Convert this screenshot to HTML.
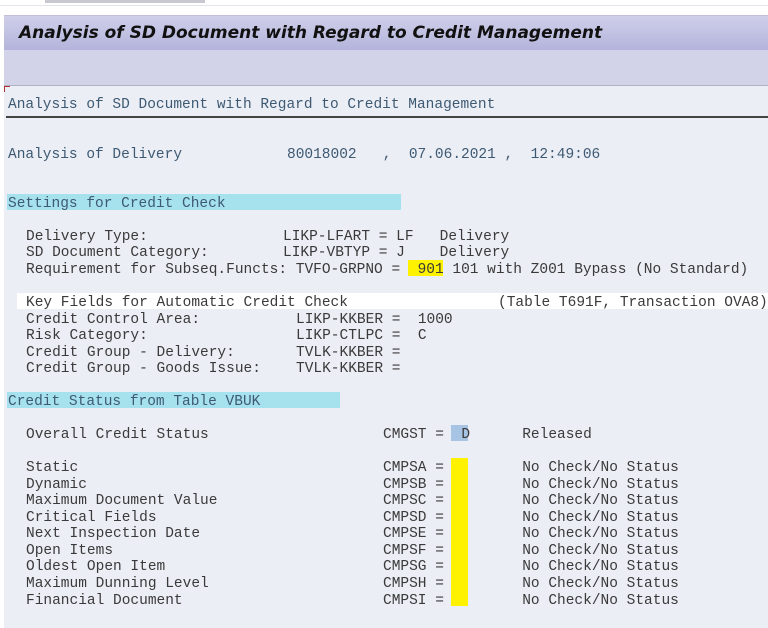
<!DOCTYPE html>
<html><head><meta charset="utf-8"><style>
*{margin:0;padding:0;box-sizing:border-box}
body{width:768px;height:628px;background:#fff;position:relative;overflow:hidden;font-family:"Liberation Mono",monospace;font-size:14.5px;color:#3a3a3a}
.a{position:absolute;white-space:pre;line-height:16px;margin-top:2px}
.h{color:#3e5a72}
.bar{position:absolute}
</style></head><body>
<div class="bar" style="left:45px;top:0;width:160px;height:3px;background:#c8c8d0"></div>
<div class="bar" style="left:0;top:5px;width:768px;height:1px;background:#e4e4ec"></div>
<div class="bar" style="left:4px;top:15px;width:764px;height:35px;background:linear-gradient(#cfcfea,#b4b4dc);border-top:1px solid #c0c0d8"></div>
<div class="a" style="left:19px;top:20px;font-family:'DejaVu Sans','Liberation Sans',sans-serif;font-weight:bold;font-style:italic;font-size:17px;line-height:22px;color:#111">Analysis of SD Document with Regard to Credit Management</div>
<div class="bar" style="left:4px;top:50px;width:764px;height:36px;background:#d2d3e8;border-bottom:1px solid #b0b2c8"></div>
<div class="bar" style="left:4px;top:86px;width:764px;height:542px;background:#eceef6"></div>
<div class="bar" style="left:4px;top:86px;width:6px;height:1px;background:#b03030"></div>
<div class="bar" style="left:4px;top:86px;width:1px;height:6px;background:#b03030"></div>
<div class="bar" style="left:6px;top:116px;width:762px;height:2px;background:#444"></div>
<div class="bar" style="left:7px;top:194px;width:394px;height:16px;background:#a6e2ee"></div>
<div class="bar" style="left:17px;top:293px;width:751px;height:16px;background:#fff"></div>
<div class="bar" style="left:7px;top:392px;width:333px;height:16px;background:#a6e2ee"></div>
<div class="bar" style="left:408px;top:260px;width:35px;height:16px;background:#fff200"></div>
<div class="bar" style="left:451px;top:425px;width:17px;height:16px;background:#a8c4e4"></div>
<div class="bar" style="left:451px;top:458px;width:17px;height:148px;background:#fff200"></div>

<div class="a h" style="left:8px;top:95px">Analysis of SD Document with Regard to Credit Management</div>
<div class="a h" style="left:8px;top:145px">Analysis of Delivery</div>
<div class="a h" style="left:287px;top:145px">80018002   ,  07.06.2021 ,  12:49:06</div>
<div class="a h" style="left:8px;top:194px">Settings for Credit Check</div>

<div class="a" style="left:26px;top:227px">Delivery Type:</div>
<div class="a" style="left:283px;top:227px">LIKP-LFART = LF   Delivery</div>
<div class="a" style="left:26px;top:243px">SD Document Category:</div>
<div class="a" style="left:283px;top:243px">LIKP-VBTYP = J    Delivery</div>
<div class="a" style="left:26px;top:260px">Requirement for Subseq.Functs: TVFO-GRPNO =  901 101 with Z001 Bypass (No Standard)</div>

<div class="a" style="left:26px;top:293px">Key Fields for Automatic Credit Check</div>
<div class="a" style="left:498px;top:293px">(Table T691F, Transaction OVA8)</div>
<div class="a" style="left:26px;top:310px">Credit Control Area:</div>
<div class="a" style="left:296px;top:310px">LIKP-KKBER =  1000</div>
<div class="a" style="left:26px;top:326px">Risk Category:</div>
<div class="a" style="left:296px;top:326px">LIKP-CTLPC =  C</div>
<div class="a" style="left:26px;top:343px">Credit Group - Delivery:</div>
<div class="a" style="left:296px;top:343px">TVLK-KKBER =</div>
<div class="a" style="left:26px;top:359px">Credit Group - Goods Issue:</div>
<div class="a" style="left:296px;top:359px">TVLK-KKBER =</div>

<div class="a h" style="left:8px;top:392px">Credit Status from Table VBUK</div>

<div class="a" style="left:26px;top:425px">Overall Credit Status</div>
<div class="a" style="left:383px;top:425px">CMGST =  D      Released</div>

<div class="a" style="left:26px;top:458px">Static</div>
<div class="a" style="left:383px;top:458px">CMPSA =         No Check/No Status</div>
<div class="a" style="left:26px;top:475px">Dynamic</div>
<div class="a" style="left:383px;top:475px">CMPSB =         No Check/No Status</div>
<div class="a" style="left:26px;top:491px">Maximum Document Value</div>
<div class="a" style="left:383px;top:491px">CMPSC =         No Check/No Status</div>
<div class="a" style="left:26px;top:508px">Critical Fields</div>
<div class="a" style="left:383px;top:508px">CMPSD =         No Check/No Status</div>
<div class="a" style="left:26px;top:524px">Next Inspection Date</div>
<div class="a" style="left:383px;top:524px">CMPSE =         No Check/No Status</div>
<div class="a" style="left:26px;top:541px">Open Items</div>
<div class="a" style="left:383px;top:541px">CMPSF =         No Check/No Status</div>
<div class="a" style="left:26px;top:557px">Oldest Open Item</div>
<div class="a" style="left:383px;top:557px">CMPSG =         No Check/No Status</div>
<div class="a" style="left:26px;top:574px">Maximum Dunning Level</div>
<div class="a" style="left:383px;top:574px">CMPSH =         No Check/No Status</div>
<div class="a" style="left:26px;top:591px">Financial Document</div>
<div class="a" style="left:383px;top:591px">CMPSI =         No Check/No Status</div>
</body></html>
